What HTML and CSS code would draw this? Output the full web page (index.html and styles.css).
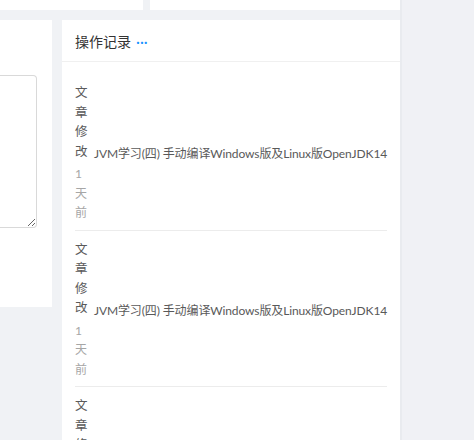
FILE: index.html
```html
<!DOCTYPE html>
<html lang="zh-CN">
<head>
    <meta charset="UTF-8">
    <meta name="viewport" content="width=device-width, initial-scale=1.0">
    <title>操作记录</title>
    <link rel="stylesheet" href="styles.css">
</head>
<body>
    <div class="page">
        <div class="main">
            <div class="top-row">
                <div class="top-card top-card-left"></div>
                <div class="top-card top-card-right"></div>
            </div>

            <div class="content-row">
                <!-- 左侧编辑卡片 -->
                <div class="edit-card">
                    <textarea class="edit-input"></textarea>
                </div>

                <!-- 操作记录 -->
                <div class="log-card">
                    <div class="log-header">
                        操作记录 <span class="more">···</span>
                    </div>
                    <ul class="log-list">
                        <li class="log-item">
                            <div class="log-meta">
                                <div class="log-type">文章修改</div>
                                <div class="log-time">1天前</div>
                            </div>
                            <div class="log-title">JVM学习(四) 手动编译Windows版及Linux版OpenJDK14</div>
                        </li>
                        <li class="log-item">
                            <div class="log-meta">
                                <div class="log-type">文章修改</div>
                                <div class="log-time">1天前</div>
                            </div>
                            <div class="log-title">JVM学习(四) 手动编译Windows版及Linux版OpenJDK14</div>
                        </li>
                        <li class="log-item">
                            <div class="log-meta">
                                <div class="log-type">文章修改</div>
                                <div class="log-time">1天前</div>
                            </div>
                            <div class="log-title">JVM学习(四) 手动编译Windows版及Linux版OpenJDK14</div>
                        </li>
                    </ul>
                </div>
            </div>
        </div>

        <div class="side"></div>
    </div>
</body>
</html>
```

FILE: styles.css
```css
* {
    margin: 0;
    padding: 0;
    box-sizing: border-box;
}

html, body {
    height: 100%;
    overflow: hidden;
}

body {
    font-family: Lato, "Noto Sans CJK SC", sans-serif;
    background-color: #f0f2f5;
    color: #595959;
}

.page {
    display: flex;
    height: 100%;
}

.main {
    width: 400px;
    display: flex;
    flex-direction: column;
}

/* 顶部卡片 */
.top-row {
    display: flex;
    gap: 7px;
    height: 10px;
    flex-shrink: 0;
}

.top-card {
    background-color: #fff;
}

.top-card-left {
    width: 143px;
}

.top-card-right {
    flex: 1;
}

.content-row {
    display: flex;
    gap: 10px;
    margin-top: 10px;
    flex: 1;
    min-height: 0;
    align-items: flex-start;
}

/* 左侧编辑卡片 */
.edit-card {
    width: 52px;
    height: 287px;
    background-color: #fff;
    padding: 55px 15px 0 0;
}

.edit-input {
    display: block;
    width: 37px;
    height: 153px;
    border: 1px solid #d9d9d9;
    border-left: none;
    border-radius: 0 4px 4px 0;
    resize: vertical;
    outline: none;
}

/* 操作记录卡片 */
.log-card {
    width: 338px;
    align-self: stretch;
    overflow: hidden;
    background-color: #fff;
}

.log-header {
    height: 42px;
    padding: 0 13px;
    display: flex;
    align-items: center;
    font-size: 14px;
    color: #333;
    border-bottom: 1px solid #f0f0f0;
}

.more {
    color: #1890ff;
    margin-left: 5px;
    font-size: 15px;
}

.log-list {
    list-style: none;
    padding: 12px 13px 0;
}

.log-item {
    display: flex;
    align-items: center;
    padding: 9px 0 7px;
    border-bottom: 1px solid #ececec;
}

.log-meta {
    width: 13px;
    flex-shrink: 0;
}

.log-type {
    font-size: 12.5px;
    line-height: 19.5px;
    color: #5a5a5a;
}

.log-time {
    font-size: 12px;
    line-height: 19.5px;
    color: #a6a6a6;
    margin-top: 3px;
}

.log-title {
    margin-left: 6px;
    font-size: 12px;
    letter-spacing: -0.12px;
    white-space: nowrap;
    color: #595959;
}

/* 右侧空白区 */
.side {
    flex: 1;
    border-left: 2px solid #e9ebef;
    background-color: #f0f1f5;
}
```
